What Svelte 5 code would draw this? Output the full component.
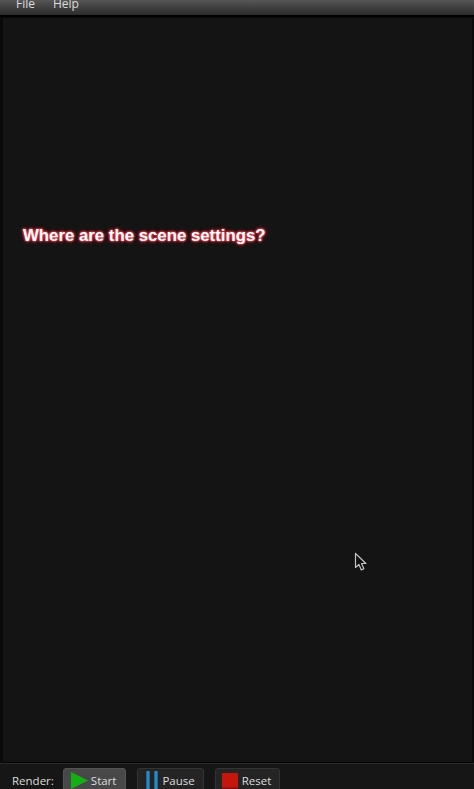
<script>
  const menus = ['File', 'Help'];
</script>

<div class="window">
  <nav class="menubar">
    {#each menus as item}
      <span class="menu-item">{item}</span>
    {/each}
  </nav>

  <main class="viewport">
    <p class="hint">Where are the scene settings?</p>
    <svg class="cursor" width="14" height="20" viewBox="0 0 14 20">
      <path d="M1.5 1.5v14l3.4-3 2.4 5.4 2.6-1.2-2.4-5.2h4.4z" fill="#111" stroke="#c4c4c4" stroke-width="1.2" stroke-linejoin="round" />
    </svg>
  </main>

  <footer class="toolbar">
    <span class="label">Render:</span>
    <button class="btn start">
      <svg width="17" height="17" viewBox="0 0 17 17"><path d="M0 0l17 8.5-17 8.5z" fill="#12b012" /></svg>
      Start
    </button>
    <button class="btn pause">
      <svg width="12" height="20" viewBox="0 0 12 20">
        <defs>
          <linearGradient id="bar">
            <stop offset="0" stop-color="#14527e" />
            <stop offset="0.5" stop-color="#3a9ad8" />
            <stop offset="1" stop-color="#14527e" />
          </linearGradient>
        </defs>
        <rect x="0" y="0" width="4" height="20" fill="url(#bar)" />
        <rect x="8" y="0" width="4" height="20" fill="url(#bar)" />
      </svg>
      Pause
    </button>
    <button class="btn reset">
      <span class="stop"></span>
      Reset
    </button>
  </footer>
</div>

<style>
  :global(body) {
    background: #000;
  }

  .window {
    display: flex;
    flex-direction: column;
    height: 789px;
    overflow: hidden;
    background: #0a0a0a;
    font-family: "Open Sans", "Noto Sans", sans-serif;
    color: #dcdcdc;
  }

  .menubar {
    flex: none;
    height: 15px;
    display: flex;
    align-items: flex-end;
    gap: 18px;
    padding: 0 16px;
    background: linear-gradient(#565656, #2b2b2b);
    border-bottom: 2px solid #000;
    overflow: hidden;
  }

  .menu-item {
    font-size: 12px;
    line-height: 16px;
    margin-bottom: 3px;
  }

  .viewport {
    flex: 1;
    position: relative;
    margin: 1px 2px 0 3px;
    background: #141414;
    border-bottom: 1px solid #000;
  }

  .hint {
    margin: 0;
    padding: 208px 0 0 20px;
    font-family: "Liberation Sans", Arial, sans-serif;
    font-size: 16.8px;
    font-weight: 700;
    line-height: 20px;
    color: #fff;
    text-shadow: 0 0 2px #f04050, 0 0 2px #f04050, 0 0 3px #e8303f, 0 0 4px #c02030;
  }

  .cursor {
    position: absolute;
    left: 351px;
    top: 534px;
  }

  .toolbar {
    flex: none;
    box-sizing: border-box;
    height: 26px;
    display: flex;
    align-items: flex-start;
    padding: 4px 0 0 12px;
    background: #161616;
    border-top: 1px solid #2c2c2c;
    overflow: hidden;
    font-size: 11.5px;
  }

  .label {
    line-height: 25px;
    margin-right: 9px;
  }

  .btn {
    flex: none;
    display: flex;
    align-items: center;
    height: 25px;
    margin-right: 11px;
    border: 1px solid #333;
    border-radius: 3px;
    background: #242424;
    color: #dcdcdc;
    font: inherit;
  }

  .btn.start {
    gap: 3px;
    padding: 0 9px 0 7px;
    background: #484848;
    border-color: #555;
  }

  .btn.pause {
    gap: 4px;
    padding: 0 8px;
  }

  .btn.reset {
    gap: 4px;
    padding: 0 8px 0 6px;
  }

  .stop {
    width: 16px;
    height: 16px;
    background: linear-gradient(#c4160a 85%, #6e0c06);
  }
</style>
